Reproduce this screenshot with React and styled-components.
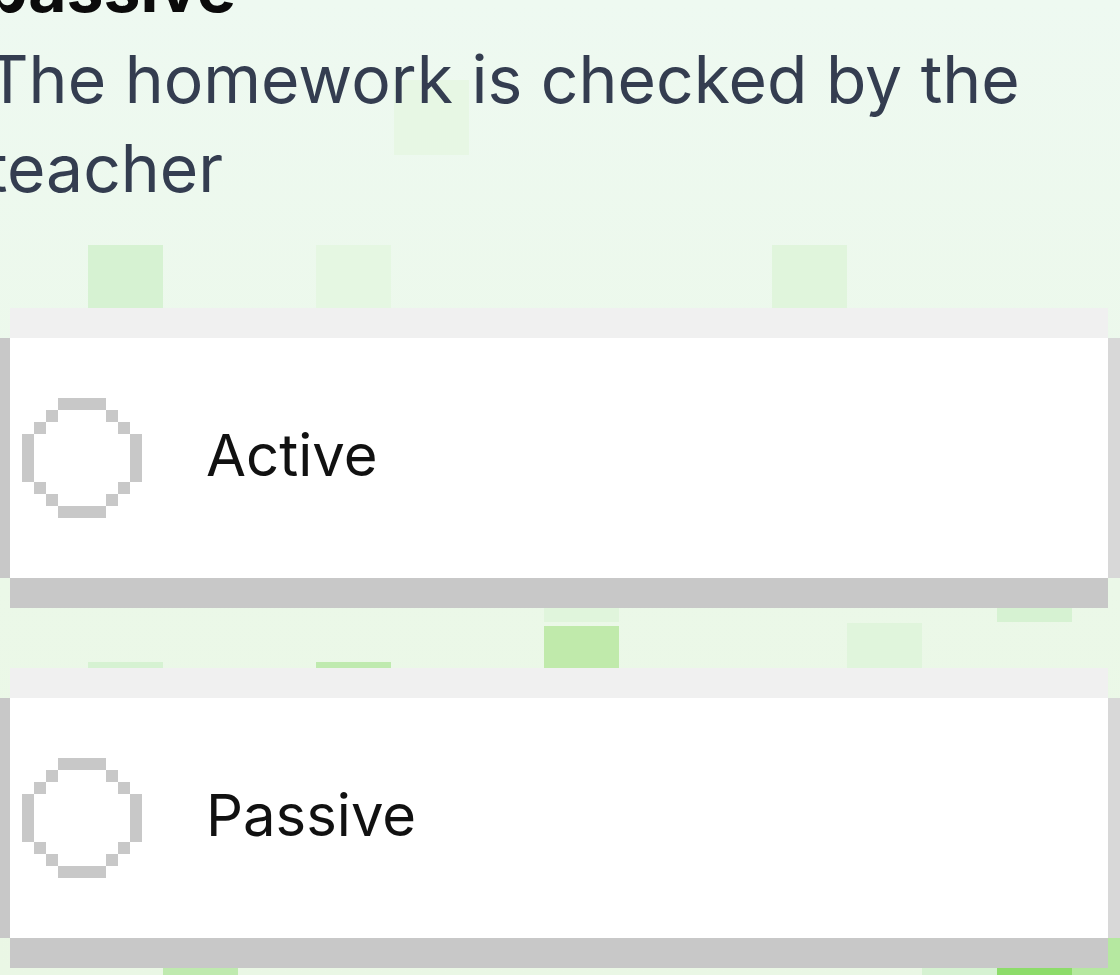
import React from 'react';
import styled, { createGlobalStyle } from 'styled-components';

const Global = createGlobalStyle`
  html, body { margin: 0; padding: 0; }
  body {
    background: #ecf8ec;
    font-family: Inter, "Noto Sans", sans-serif;
    overflow: hidden;
  }
`;

const Screen = styled.div`
  position: relative;
  width: 1120px;
  height: 975px;
  overflow: hidden;
  background: linear-gradient(180deg, #eef9f1 0%, #ebf8e8 60%, #eaf7e5 100%);
`;

const TileLayer = styled.div`
  position: absolute;
  inset: 0;
  pointer-events: none;
`;

const Tile = styled.div`
  position: absolute;
  left: ${(p) => p.$x}px;
  top: ${(p) => p.$y}px;
  width: 75px;
  height: ${(p) => p.$h || 75}px;
  background: ${(p) => p.$c};
`;

const Content = styled.div`
  position: relative;
  z-index: 1;
  display: flex;
  flex-direction: column;
  margin-top: -145px;
`;

const Heading = styled.h1`
  margin: 0 0 2px -14px;
  max-width: 420px;
  font-size: 66px;
  line-height: 89px;
  font-weight: 700;
  color: #0b0b0b;
`;

const Question = styled.p`
  margin: 0 0 0 -14px;
  max-width: 1110px;
  font-size: 66px;
  line-height: 89px;
  font-weight: 400;
  color: #343d50;
`;

const Options = styled.div`
  display: flex;
  flex-direction: column;
  gap: 120px;
  margin: 125px 12px 0 10px;
`;

const Option = styled.button`
  all: unset;
  box-sizing: border-box;
  display: flex;
  align-items: center;
  gap: 64px;
  height: 240px;
  padding-left: 12px;
  background: #ffffff;
  cursor: pointer;
  box-shadow:
    0 -30px 0 #f0f0f0,
    0 30px 0 #c8c8c8,
    -10px 0 0 #c8c8c8,
    12px 0 0 #d8d8d8;
`;

const OptionLabel = styled.span`
  font-family: Inter, "Noto Sans", sans-serif;
  font-size: 58px;
  font-weight: 400;
  line-height: 1;
  margin-top: -6px;
  color: #111111;
`;

const RadioSvg = styled.svg`
  flex: none;
  display: block;
`;

const RADIO_CELLS = [
  [3, 0, 4, 1], [2, 1, 1, 1], [7, 1, 1, 1], [1, 2, 1, 1], [8, 2, 1, 1],
  [0, 3, 1, 4], [9, 3, 1, 4], [1, 7, 1, 1], [8, 7, 1, 1], [2, 8, 1, 1],
  [7, 8, 1, 1], [3, 9, 4, 1],
];

const PixelRadio = () => (
  <RadioSvg width="120" height="120" viewBox="0 0 10 10" shapeRendering="crispEdges">
    {RADIO_CELLS.map(([x, y, w, h], i) => (
      <rect key={i} x={x} y={y} width={w} height={h} fill="#c8c8c8" />
    ))}
  </RadioSvg>
);

const TILES = [
  { x: 394, y: 80, c: '#e7f7e4' },
  { x: 88, y: 245, c: '#d6f2d2' },
  { x: 316, y: 245, c: '#e5f7e2' },
  { x: 772, y: 245, c: '#e0f5dc' },
  { x: 544, y: 547, c: '#e0f5dc' },
  { x: 997, y: 547, c: '#d6f2d2' },
  { x: 544, y: 626, c: '#c0eaab' },
  { x: 847, y: 623, c: '#e0f5dc' },
  { x: 88, y: 662, c: '#d6f2d2' },
  { x: 316, y: 662, c: '#bfeaaf' },
  { x: 1072, y: 930, c: '#b5e8a0', h: 75 },
  { x: 163, y: 968, c: '#bfeaaf' },
  { x: 922, y: 968, c: '#d6f2d2' },
  { x: 997, y: 968, c: '#8ddc6a' },
];

const OPTIONS = ['Active', 'Passive'];

export default function App() {
  return (
    <>
      <Global />
      <Screen>
        <TileLayer>
          {TILES.map((t, i) => (
            <Tile key={i} $x={t.x} $y={t.y} $c={t.c} $h={t.h} />
          ))}
        </TileLayer>
        <Content>
          <Heading>Active or passive</Heading>
          <Question>The homework is checked by the teacher</Question>
          <Options>
            {OPTIONS.map((o) => (
              <Option key={o} type="button">
                <PixelRadio />
                <OptionLabel>{o}</OptionLabel>
              </Option>
            ))}
          </Options>
        </Content>
      </Screen>
    </>
  );
}
